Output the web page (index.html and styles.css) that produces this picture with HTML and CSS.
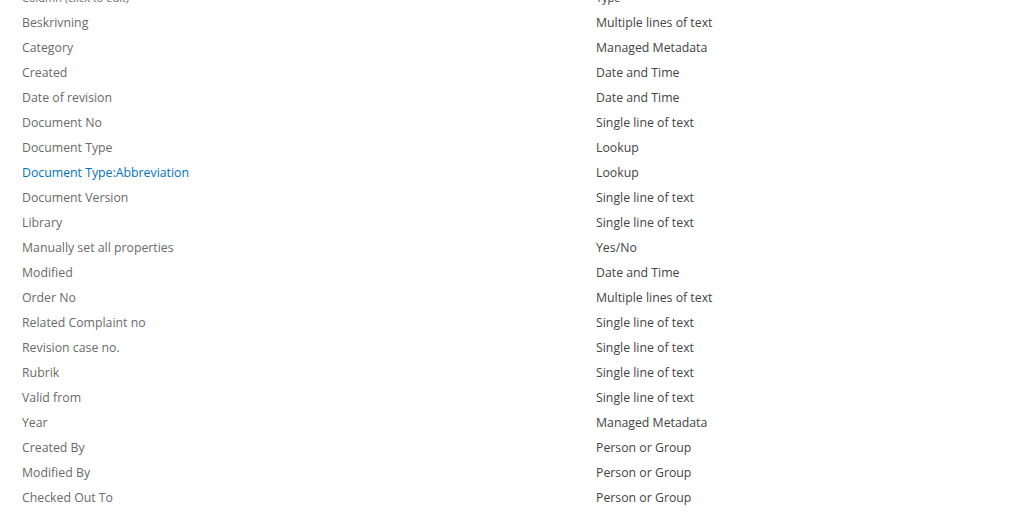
FILE: index.html
```html
<!DOCTYPE html>
<html>
<head>
<meta charset="utf-8">
<link rel="stylesheet" href="styles.css">
</head>
<body>
<div class="page">
  <table class="cols">
    <thead>
      <tr><th class="name">Column (click to edit)</th><th class="type">Type</th></tr>
    </thead>
    <tbody>
      <tr><td class="name">Beskrivning</td><td class="type">Multiple lines of text</td></tr>
      <tr><td class="name">Category</td><td class="type">Managed Metadata</td></tr>
      <tr><td class="name">Created</td><td class="type">Date and Time</td></tr>
      <tr><td class="name">Date of revision</td><td class="type">Date and Time</td></tr>
      <tr><td class="name">Document No</td><td class="type">Single line of text</td></tr>
      <tr><td class="name">Document Type</td><td class="type">Lookup</td></tr>
      <tr><td class="name"><a class="link" href="#">Document Type:Abbreviation</a></td><td class="type">Lookup</td></tr>
      <tr><td class="name">Document Version</td><td class="type">Single line of text</td></tr>
      <tr><td class="name">Library</td><td class="type">Single line of text</td></tr>
      <tr><td class="name">Manually set all properties</td><td class="type">Yes/No</td></tr>
      <tr><td class="name">Modified</td><td class="type">Date and Time</td></tr>
      <tr><td class="name">Order No</td><td class="type">Multiple lines of text</td></tr>
      <tr><td class="name">Related Complaint no</td><td class="type">Single line of text</td></tr>
      <tr><td class="name">Revision case no.</td><td class="type">Single line of text</td></tr>
      <tr><td class="name">Rubrik</td><td class="type">Single line of text</td></tr>
      <tr><td class="name">Valid from</td><td class="type">Single line of text</td></tr>
      <tr><td class="name">Year</td><td class="type">Managed Metadata</td></tr>
      <tr><td class="name">Created By</td><td class="type">Person or Group</td></tr>
      <tr><td class="name">Modified By</td><td class="type">Person or Group</td></tr>
      <tr><td class="name">Checked Out To</td><td class="type">Person or Group</td></tr>
    </tbody>
  </table>
</div>
</body>
</html>
```
FILE: styles.css
```css
html, body {
  margin: 0;
  padding: 0;
  background: #fff;
}
body {
  font-family: "Open Sans", "Noto Sans", "Liberation Sans", sans-serif;
  font-size: 12.3px;
  overflow: hidden;
}
.page {
  margin-top: -15px;
  padding-left: 22px;
}
.cols {
  border-collapse: collapse;
}
.cols th, .cols td {
  height: 25px;
  padding: 0;
  text-align: left;
  vertical-align: middle;
  white-space: nowrap;
  font-weight: normal;
}
.cols .name {
  width: 574px;
  color: #6a6a6a;
}
.cols .type {
  color: #444444;
}
.cols th {
  color: #888888;
  font-size: 11px;
}
.link {
  color: #0072c6;
  text-decoration: none;
}
```
